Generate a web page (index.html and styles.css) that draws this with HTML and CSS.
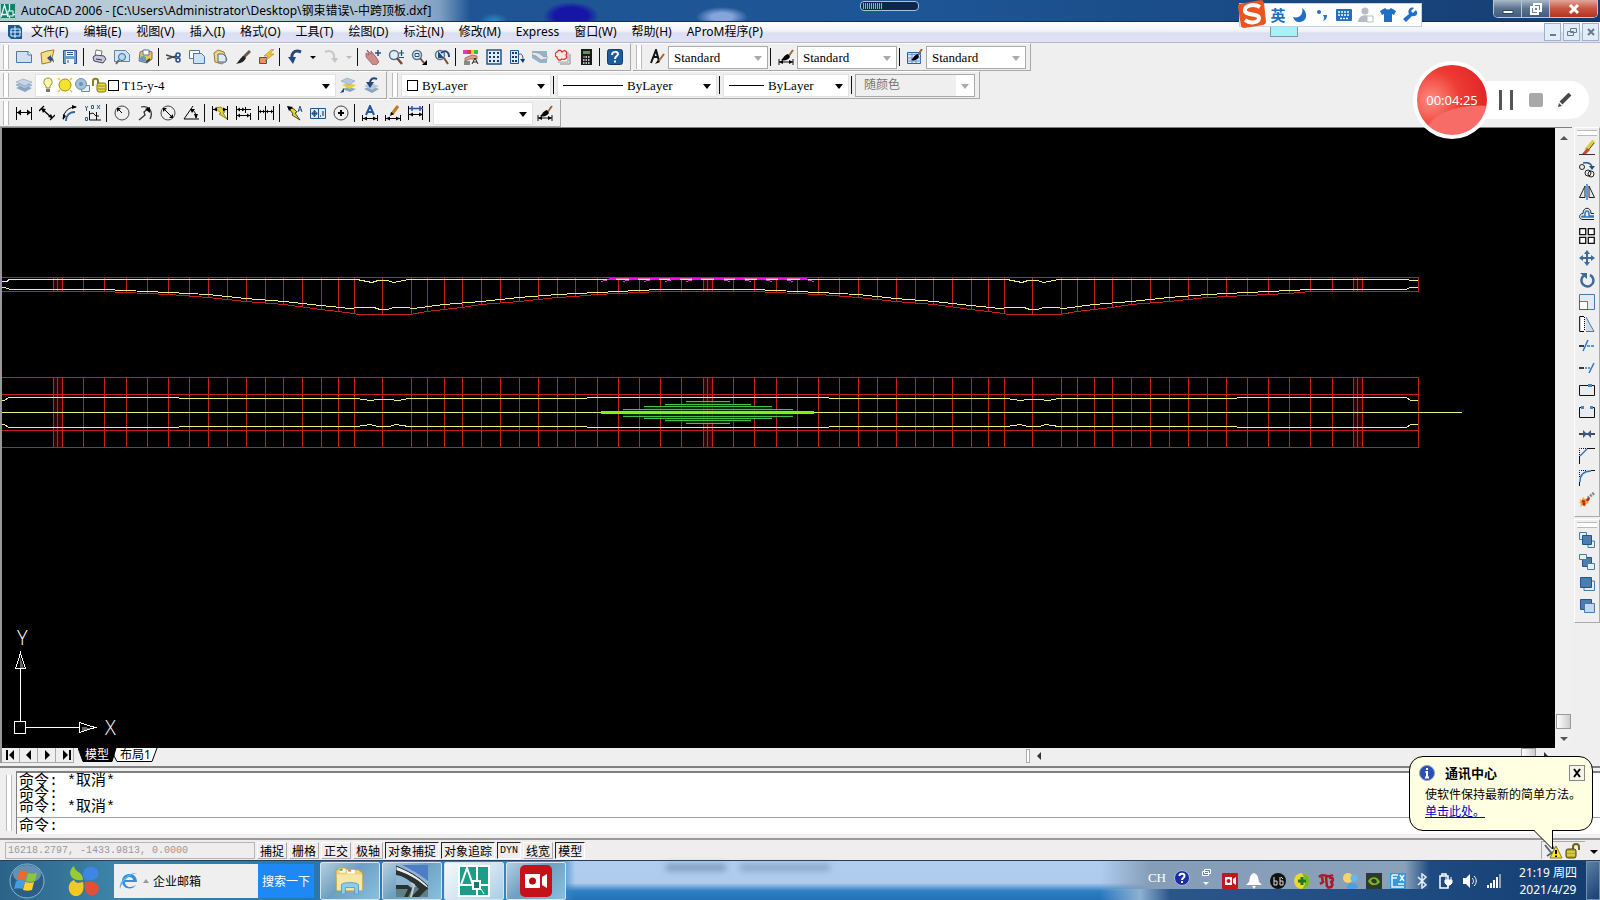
FILE: index.html
```html
<!DOCTYPE html>
<html lang="zh-CN">
<head>
<meta charset="utf-8">
<title>AutoCAD 2006</title>
<link rel="stylesheet" href="styles.css">
</head>
<body>
<header class="titlebar">
  <svg class="app-icon" viewBox="0 0 16 16"><rect width="16" height="16" fill="#0d8270"/><path d="M1 14L4.500 2 8 14M9.500 1v14M0 11.500h16" stroke="#e8f5f2" fill="none" stroke-width="1.300"/><rect x="8" y="8" width="5" height="5" fill="#0d8270" stroke="#fff"/><path d="M.5.500h15v15H.5z" fill="none" stroke="#9fd0c6"/></svg>
  <h1 class="title">AutoCAD 2006 - [C:\Users\Administrator\Desktop\钢束错误\-中跨顶板.dxf]</h1>
  <div class="winbtns">
    <button class="wb" aria-label="最小化"><svg width="14" height="14"><path d="M2 8.500h10v3H2z" fill="#fff" stroke="#345"/></svg></button>
    <button class="wb" aria-label="还原"><svg width="14" height="14"><path d="M5 2h7v7H5zM2 5h7v7H2z" fill="#68809c" stroke="#fff" stroke-width="2"/></svg></button>
    <button class="wb close" aria-label="关闭"><svg width="14" height="14"><path d="M3 3l8 8M11 3l-8 8" stroke="#fff" stroke-width="3"/></svg></button>
  </div>
</header>

<nav class="menubar">
  <svg class="doc-icon" viewBox="0 0 16 16"><path d="M1 1h11l3 3v11H4l-3-3z" fill="#1d5a8c"/><path d="M4 5h9v7H4zM8 2v12M3 8h11" stroke="#dff1ff" fill="none"/></svg>
  <button>文件(F)</button><button>编辑(E)</button><button>视图(V)</button><button>插入(I)</button><button>格式(O)</button><button>工具(T)</button><button>绘图(D)</button><button>标注(N)</button><button>修改(M)</button><button>Express</button><button>窗口(W)</button><button>帮助(H)</button><button>AProM程序(P)</button>
  <div class="mdibtns">
    <button aria-label="最小化窗口"><svg width="10" height="10"><path d="M2 8h6" stroke="#667b8f" stroke-width="2"/></svg></button>
    <button aria-label="还原窗口"><svg width="10" height="10"><path d="M3.500 1.500h6v4h-6zM.5 4.500h6v4h-6z" fill="#dce9f5" stroke="#667b8f"/></svg></button>
    <button aria-label="关闭窗口"><svg width="10" height="10"><path d="M2 2l6 6M8 2L2 8" stroke="#667b8f" stroke-width="2"/></svg></button>
  </div>
</nav>

<div class="toolrow">
  <div class="toolbar" role="toolbar" aria-label="标准"><i class="grip"></i>
    <button class="t" aria-label="新建"><svg viewBox="0 0 16 16"><path d="M.5 2.500h12l3 3v8H.5z" fill="#cfe0f2" stroke="#4a78a8"/><path d="M12 2v4h4" fill="#fff" stroke="#4a78a8"/></svg></button>
    <button class="t" aria-label="打开"><svg viewBox="0 0 16 16"><path d="M2 4l6-2 7-1-3 12-9 2z" fill="#f5dd8a" stroke="#a27c22"/><path d="M8 9l4-3v2c2 1 3 3 3 6-1-2-2-3-3-3v2z" fill="#2a4f86"/></svg></button>
    <button class="t" aria-label="保存"><svg viewBox="0 0 16 16"><path d="M1.500 1.500h13v13h-13z" fill="#6f9fcc" stroke="#2d5788"/><path d="M4 2h8v5H4zM4 10h8v5H4z" fill="#eef5fb"/><path d="M5 3.500h6M5 5.500h6M6 11v3" stroke="#2d5788"/></svg></button>
    <i class="sep"></i>
    <button class="t" aria-label="打印"><svg viewBox="0 0 16 16"><path d="M5 1l6 1-1 6-6-1z" fill="#fff" stroke="#777"/><path d="M2 8l3-2 8 1 2 3-3 4-9-2z" fill="#c8c8d8" stroke="#446"/><path d="M5 10l6 1" stroke="#335"/></svg></button>
    <button class="t" aria-label="打印预览"><svg viewBox="0 0 16 16"><path d="M.5 1.500h11l4 4v7H.5z" fill="#d5e3f2" stroke="#5a83ad"/><circle cx="8" cy="8" r="3.500" fill="#b8daf5" stroke="#36648f"/><path d="M5 11l-3 4" stroke="#666" stroke-width="2"/></svg></button>
    <button class="t" aria-label="发布"><svg viewBox="0 0 16 16"><path d="M3 3l5-2 7 2v7l-5 4-8-2z" fill="#efc44c" stroke="#6e6e86"/><path d="M6 1h6v5H6z" fill="#fff" stroke="#5a7aa5"/><circle cx="6" cy="10" r="3" fill="#5d9ad0"/><path d="M9 13l4-3" stroke="#345" stroke-width="2"/></svg></button>
    <i class="sep"></i>
    <button class="t" aria-label="剪切"><svg viewBox="0 0 16 16"><path d="M0 6l10 3M1 10l9-3" stroke="#444" stroke-width="1.500"/><circle cx="12" cy="6" r="2" fill="none" stroke="#234a86" stroke-width="1.500"/><circle cx="12" cy="11" r="2" fill="none" stroke="#234a86" stroke-width="1.500"/></svg></button>
    <button class="t" aria-label="复制"><svg viewBox="0 0 16 16"><path d="M.5 1.500h10v8H.5z" fill="#fff" stroke="#4a78a8"/><path d="M4.500 4.500h8l3 3v7h-11z" fill="#cfe0f2" stroke="#4a78a8"/></svg></button>
    <button class="t" aria-label="粘贴"><svg viewBox="0 0 16 16"><path d="M2 4l4-3 6 2 3 8-5 4-7-2z" fill="#f0d58a" stroke="#9a7b28"/><path d="M6 5h5l3 3v5H6z" fill="#dfeaf5" stroke="#4a6a95"/></svg></button>
    <button class="t" aria-label="特性匹配"><svg viewBox="0 0 16 16"><path d="M15 2L8 9" stroke="#6b5848" stroke-width="3"/><path d="M9 7l2 2c-2 4-5 5-10 6 3-2 4-7 8-8z" fill="#222"/></svg></button>
    <button class="t" aria-label="块编辑器"><svg viewBox="0 0 16 16"><path d="M1.500 8.500h7v6h-7z" fill="#f09060" stroke="#2a5a9a"/><path d="M14 0L6 7h4l-3 5 9-7h-4l4-5z" fill="#f7c531" stroke="#a56a10" stroke-width=".5"/></svg></button>
    <i class="sep"></i>
    <button class="t" aria-label="放弃"><svg viewBox="0 0 16 16"><path d="M14 3C7 0 4 5 5 10" fill="none" stroke="#24477e" stroke-width="3"/><path d="M1 8h8l-3 7z" fill="#24477e"/></svg></button><button class="d" aria-label="放弃列表"></button>
    <button class="t" aria-label="重做" disabled><svg viewBox="0 0 16 16"><path d="M2 3c7-3 10 2 9 7" fill="none" stroke="#c6c6c6" stroke-width="2"/><path d="M8 9h7l-3 5z" fill="#c6c6c6"/></svg></button><button class="d off" aria-label="重做列表" disabled></button>
    <i class="sep"></i>
    <button class="t" aria-label="实时平移"><svg viewBox="0 0 16 16"><path d="M1 4l3 2-2-5 4 4 0-3 5 6 3 5-3 3H8L1 8z" fill="#cc8c8c" stroke="#8c4e55" stroke-width=".7"/><path d="M13 1v6M10 4h6" stroke="#24508c" stroke-width="1.500"/></svg></button>
    <button class="t" aria-label="实时缩放"><svg viewBox="0 0 16 16"><circle cx="6" cy="6" r="4.500" fill="#dfeefa" stroke="#5c7287" stroke-width="1.500"/><path d="M9 9l5 6" stroke="#7a4a3a" stroke-width="2.500"/><path d="M11 4h5M13.500 1v6M11 8.500h5" stroke="#1d4d86" stroke-width="1.200"/></svg></button>
    <button class="t" aria-label="窗口缩放"><svg viewBox="0 0 16 16"><circle cx="6" cy="6" r="4.500" fill="#dfeefa" stroke="#5c7287" stroke-width="1.500"/><path d="M4 4.500h4v3H4z" fill="none" stroke="#1d4d86"/><path d="M9 9l4 5" stroke="#7a4a3a" stroke-width="2"/><path d="M16 11v5h-5z"/></svg></button>
    <button class="t" aria-label="缩放上一个"><svg viewBox="0 0 16 16"><circle cx="6" cy="6" r="4.500" fill="#dfeefa" stroke="#5c7287" stroke-width="1.500"/><path d="M10 9l4 6" stroke="#7a4a3a" stroke-width="2"/><path d="M15 8c0-6-4-7-8-4" fill="none" stroke="#24477e" stroke-width="2"/><path d="M4 2v7h6z" fill="#24477e"/></svg></button>
    <i class="sep"></i>
    <button class="t" aria-label="特性"><svg viewBox="0 0 16 16"><path d="M0 1h4v4H0z" fill="#e03ac0"/><path d="M4 1h4v4H4z" fill="#e23b2b"/><path d="M8 1h3v4H8z" fill="#f5d21f"/><path d="M11 1h4v4h-4z" fill="#3cbc3c"/><path d="M2 9l7-3 5 1v3H7l-5 2z" fill="#dba38b" stroke="#875546" stroke-width=".7"/><path d="M1 13h6M1 15h6M9 15l3-6 3 6M10 13h4" stroke="#222" fill="none"/></svg></button>
    <button class="t" aria-label="设计中心"><svg viewBox="0 0 16 16"><path d="M1 1h14v14H1z" fill="#dcecfb" stroke="#24548c" stroke-width="1.500"/><path d="M3 4h2M3 8h2M3 12h2M7 4h2M11 4h2M7 8h2M11 8h2M7 12h2M11 12h2" stroke="#163a6c" stroke-width="2"/></svg></button>
    <button class="t" aria-label="工具选项板"><svg viewBox="0 0 16 16"><path d="M1.500 1.500h8v13h-8z" fill="#dcecfb" stroke="#24548c"/><path d="M3 4h2M3 8h2M3 12h2M6 4h2M6 8h2M6 12h2" stroke="#163a6c" stroke-width="2"/><path d="M9 6c4-3 5 1 5 5" fill="none" stroke="#24548c"/><path d="M11 10h5l-2 4z" fill="#163a6c"/></svg></button>
    <button class="t" aria-label="图纸集"><svg viewBox="0 0 16 16"><path d="M0 2h15v12H8L0 9z" fill="#91b4cf"/><path d="M0 3l7 1 5 4 3-1v3l-6 1-5-4-4-1z" fill="#e3e6ea" stroke="#888" stroke-width=".6"/></svg></button>
    <button class="t" aria-label="标记集"><svg viewBox="0 0 16 16"><path d="M5 15h10V5" fill="none" stroke="#888"/><path d="M3 13h10V3" fill="#fff" stroke="#999"/><path d="M2 3c2-3 4-2 5 0 3-3 6 0 4 3 2 3-1 5-4 4-2 2-5 1-5-2-3-1-2-4 0-5z" fill="#fbe4e4" stroke="#e22b2b" stroke-width="1.300"/></svg></button>
    <button class="t" aria-label="计算器"><svg viewBox="0 0 16 16"><path d="M3 0h11v16H3z" fill="#191919"/><path d="M5 2h7v3H5z" fill="#4e9b5c"/><path d="M5 8h7M5 11h7M5 14h7" stroke="#eee" stroke-width="1.500" stroke-dasharray="1.500 1"/><path d="M5 8h1" stroke="#e22" stroke-width="2"/></svg></button>
    <i class="sep"></i>
    <button class="t" aria-label="帮助"><svg viewBox="0 0 16 16"><rect x=".5" y=".5" width="15" height="15" rx="2" fill="#1d5c9c" stroke="#123e6d"/><path d="M5 6c0-4 6-4 6-1 0 2-3 2-3 5M8 11.500v2" stroke="#fff" fill="none" stroke-width="2"/></svg></button>
  </div>
  <div class="toolbar" role="toolbar" aria-label="样式"><i class="grip"></i>
    <button class="t" aria-label="文字样式"><svg viewBox="0 0 16 16"><path d="M2 14L7 1l3 11M4 8h5" stroke="#111" stroke-width="2" fill="none"/><path d="M15 5l-6 8" stroke="#a0653a" stroke-width="2"/><path d="M6 15l3-4 2 2z"/></svg></button>
    <label class="combo dim w100"><select aria-label="文字样式"><option>Standard</option></select></label><i class="sep"></i>
    <button class="t" aria-label="标注样式"><svg viewBox="0 0 16 16"><path d="M15 1l-5 7" stroke="#a0653a" stroke-width="2"/><path d="M3 11c2-1 3-5 7-6l2 3c-2 3-5 4-9 3z"/><path d="M1 10v6M15 10v6M1 13h14" stroke="#111"/><path d="M1 13l4-2v4zM15 13l-4-2v4z"/></svg></button>
    <label class="combo dim w100"><select aria-label="标注样式"><option>Standard</option></select></label><i class="sep"></i>
    <button class="t" aria-label="表格样式"><svg viewBox="0 0 16 16"><path d="M.5 3.500h13v11H.5z" fill="#d2e4fa" stroke="#2c5da8"/><path d="M1 5.500h13M1 9h13M1 12h13M5 4v10M9 4v10" stroke="#6f9ad6"/><path d="M15 0l-4 6" stroke="#a0653a" stroke-width="2"/><path d="M4 11c2-1 3-5 7-6l1 3c-2 3-5 4-8 3z"/></svg></button>
    <label class="combo dim w100"><select aria-label="表格样式"><option>Standard</option></select></label>
  </div>
</div>

<div class="toolrow">
  <div class="toolbar" role="toolbar" aria-label="图层"><i class="grip"></i>
    <button class="t" aria-label="图层特性管理器"><svg viewBox="0 0 16 16"><path d="M0 11l7-3 9 3-7 4z" fill="#8aa5bf"/><path d="M0 8l7-3 9 3-7 4z" fill="#a8bfd4" stroke="#6f8ca8" stroke-width=".5"/><path d="M0 5l7-3 9 3-7 4z" fill="#c6d6e6" stroke="#7b96b0" stroke-width=".5"/></svg></button>
    <label class="combo layer">
      <svg viewBox="0 0 16 16"><path d="M8 1c5 0 5 6 2 8v2H6V9C3 7 3 1 8 1z" fill="#fff9ae" stroke="#998c28"/><path d="M6 12h4v3H6z" fill="#6c7a8c"/></svg>
      <svg viewBox="0 0 16 16"><circle cx="8" cy="8" r="6" fill="#f4e32b" stroke="#a98a10"/><path d="M1 1l2 2M15 1l-2 2M1 15l2-2M15 15l-2-2" stroke="#ecc41d" stroke-width="1.500"/></svg>
      <svg viewBox="0 0 16 16"><path d="M7.500 8.500h8v6h-8z" fill="#e7eef5" stroke="#7089a1"/><circle cx="7" cy="7" r="5.500" fill="#a4c1d8" stroke="#7894ac"/><circle cx="7" cy="7" r="2" fill="#6c93b4"/></svg>
      <svg viewBox="0 0 16 16"><path d="M2 9V4c0-3 5-3 5 0v3" fill="none" stroke="#8d8212" stroke-width="2"/><rect x="6" y="6" width="9" height="9" rx="2" fill="#e4d944" stroke="#7e7310"/><path d="M7 9h7M7 12h7" stroke="#9a8c1a"/></svg>
      <i class="swatch"></i><select aria-label="图层"><option>T15-y-4</option></select>
    </label>
    <button class="t" aria-label="将对象的图层置为当前"><svg viewBox="0 0 16 16"><path d="M2 12l6-2 8 2-6 3z" fill="#8aa5bf"/><path d="M2 8l6-2 8 2-6 4z" fill="#e8cf3a"/><path d="M1 4l6-3 8 3-6 4z" fill="#b7cadb" stroke="#7b96b0" stroke-width=".5"/><path d="M0 16l4-5v4z" fill="#24477e"/></svg></button>
    <button class="t" aria-label="上一个图层"><svg viewBox="0 0 16 16"><path d="M1 12l7-3 8 3-7 4z" fill="#8aa5bf"/><path d="M1 9l7-3 8 3-7 4z" fill="#b7cadb"/><path d="M14 2C9 0 7 3 7 6" fill="none" stroke="#24477e" stroke-width="2"/><path d="M3 5h8l-4 6z" fill="#24477e"/></svg></button>
  </div>
  <div class="toolbar" role="toolbar" aria-label="对象特性"><i class="grip"></i>
    <label class="combo w150"><i class="swatch"></i><select aria-label="颜色"><option>ByLayer</option></select></label><i class="sep"></i>
    <label class="combo w160"><i class="line l60"></i><select aria-label="线型"><option>ByLayer</option></select></label><i class="sep"></i>
    <label class="combo w126"><i class="line l35"></i><select aria-label="线宽"><option>ByLayer</option></select></label><i class="sep"></i>
    <label class="combo dim grey w120"><select aria-label="打印样式" disabled><option>随颜色</option></select></label>
  </div>
</div>

<div class="toolrow">
  <div class="toolbar" role="toolbar" aria-label="标注"><i class="grip"></i>
    <button class="t" aria-label="线性标注"><svg viewBox="0 0 16 16"><path d="M.5 2v13M15.500 2v13M1 7.500h14" stroke="#000"/><path d="M1 7.500l4-3v6zM15 7.500l-4-3v6z"/></svg></button>
    <button class="t" aria-label="对齐标注"><svg viewBox="0 0 16 16"><path d="M0 6l5-5M11 15l5-5M3 4l10 9" stroke="#000" stroke-width="1.300"/><path d="M2 3l5 1-3 4zM14 13l-5-1 3-3z"/></svg></button>
    <button class="t" aria-label="弧长标注"><svg viewBox="0 0 16 16"><path d="M1 14C2 6 7 2 14 2" fill="none" stroke="#000"/><path d="M4 16c0-5 3-9 9-9" fill="none" stroke="#2c63ac" stroke-width="2"/><path d="M15 2l-5-2v4zM1 15V9l3 2z"/></svg></button>
    <button class="t" aria-label="坐标标注"><svg viewBox="0 0 16 16"><path d="M4.500 6v9H16M4 9l4-1 3 3h3M11.500 7v8" fill="none" stroke="#111"/><path d="M0 1l1.500 2L3 1M1.500 3v3M12 0l3 4M15 0l-3 4M.5 12.500h2v3h-2zM6.500.500h2v3h-2z" fill="none" stroke="#345b94"/></svg></button>
    <i class="sep"></i>
    <button class="t" aria-label="半径标注"><svg viewBox="0 0 16 16"><circle cx="8" cy="8" r="7" fill="none" stroke="#444"/><path d="M8 8L4 4" stroke="#000"/><path d="M3 3h4L3 7z"/></svg></button>
    <button class="t" aria-label="折弯标注"><svg viewBox="0 0 16 16"><path d="M4 2c7-2 13 4 9 12M2 15l6-5-1-3 5-4" fill="none" stroke="#333" stroke-width="1.300"/><path d="M13 2v6L8 4z"/></svg></button>
    <button class="t" aria-label="直径标注"><svg viewBox="0 0 16 16"><circle cx="8" cy="8" r="7" fill="none" stroke="#444"/><path d="M4 4l8 8" stroke="#000"/><path d="M3 3h4L3 7zM13 13H9l4-4z"/></svg></button>
    <button class="t" aria-label="角度标注"><svg viewBox="0 0 16 16"><path d="M10 1L1 14h15M8 4c4 2 5 5 5 9" fill="none" stroke="#000"/><path d="M7 4l5 0-3 4zM13 14l-2-5h4z"/></svg></button>
    <i class="sep"></i>
    <button class="t" aria-label="快速标注"><svg viewBox="0 0 16 16"><path d="M.5 1v14M15.500 1v14M1 4.500h14" stroke="#000"/><path d="M3 3l6-1 4 5-2 1 4 6-8-5 2-1z" fill="#e8d42c" stroke="#665e10" stroke-width=".7"/><path d="M1 4.500l4-2v4zM15 4.500l-4-2v4z"/></svg></button>
    <button class="t" aria-label="基线标注"><svg viewBox="0 0 16 16"><path d="M1.500 1v14M10.500 2v6M15.500 8v7M2 4.500h14M2 10.500h13" stroke="#000"/><path d="M2 4.500l3-2v4zM10 4.500l-3-2v4zM2 10.500l3-2v4zM15 10.500l-3-2v4z"/></svg></button>
    <button class="t" aria-label="连续标注"><svg viewBox="0 0 16 16"><path d="M.5 1v14M7.500 1v14M15.500 1v14M1 6.500h14" stroke="#000"/><path d="M1 6.500l2-2v4zM7 6.500l-2-2v4zM8 6.500l2-2v4zM15 6.500l-2-2v4z"/></svg></button>
    <i class="sep"></i>
    <button class="t" aria-label="快速引线"><svg viewBox="0 0 16 16"><path d="M1 2l6 2 3 3-2 1 5 7-8-5 1-1z" fill="#e8d42c" stroke="#222" stroke-width=".8"/><path d="M0 1l6 1-4 4z"/><path d="M11 7l2-6 2 6M12 5h3" stroke="#2c4f94" fill="none"/></svg></button>
    <button class="t" aria-label="公差"><svg viewBox="0 0 16 16"><path d="M.5 3.500h15v10H.5zM8.500 3v11" fill="#dceafa" stroke="#24548c"/><circle cx="4.500" cy="8.500" r="2" fill="none" stroke="#24548c"/><path d="M4.500 5v7M1.500 8.500h6M10 11h1M13 6v5" stroke="#24548c" stroke-width="1.300"/></svg></button>
    <button class="t" aria-label="圆心标记"><svg viewBox="0 0 16 16"><circle cx="8" cy="8" r="7" fill="none" stroke="#444"/><path d="M8 5v6M5 8h6" stroke="#000" stroke-width="2"/></svg></button>
    <i class="sep"></i>
    <button class="t" aria-label="编辑标注"><svg viewBox="0 0 16 16"><path d="M4 10l4-9 4 9M5 7h6" fill="none" stroke="#2456a0" stroke-width="2"/><path d="M.5 10v6M15.500 10v6M1 13.500h14" stroke="#000"/><path d="M1 13.500l4-2v4zM15 13.500l-4-2v4z"/></svg></button>
    <button class="t" aria-label="编辑标注文字"><svg viewBox="0 0 16 16"><path d="M13 1L7 9" stroke="#c67a1a" stroke-width="3"/><path d="M5 11l1-4 3 2z"/><path d="M.5 10v6M15.500 10v6M1 13.500h14" stroke="#000"/><path d="M1 13.500l4-2v4zM15 13.500l-4-2v4z"/></svg></button>
    <button class="t" aria-label="标注更新"><svg viewBox="0 0 16 16"><path d="M.5 1v14M14.500 1v14M1 9.500h14" stroke="#000"/><path d="M1 3.500h14M4 1v5M12 1v5" stroke="#2456a0" stroke-width="1.500"/><path d="M1 9.500l4-2v4zM15 9.500l-4-2v4z"/></svg></button>
    <i class="sep"></i>
    <label class="combo w100"><select aria-label="当前标注样式"><option></option></select></label>
    <button class="t" aria-label="标注样式管理"><svg viewBox="0 0 16 16"><path d="M15 1l-5 7" stroke="#a0653a" stroke-width="2"/><path d="M3 11c2-1 3-5 7-6l2 3c-2 3-5 4-9 3z"/><path d="M1 10v6M15 10v6M1 13h14" stroke="#111"/><path d="M1 13l4-2v4zM15 13l-4-2v4z"/></svg></button>
  </div>
</div>

<main class="work">
  <section class="docwin">
    <div class="viewrow">
      <svg class="drawing" role="img" aria-label="图形">
        <defs>
          <path id="girder" d="M0 277.500V291.500H104L147 293.500L169 294.500L208 297.500L246 301.500L284 304.500L321 309.500L338 311.500L354 313.500L358 314.500H410L427 311.500L444 309.500L462 307.500L481 304.500L519 301.500L557 297.500L575 296.500L597 294.500L618 293.500L660 291.500H754L797 293.500L819 294.500L858 297.500L896 301.500L934 304.500L971 309.500L988 311.500L1004 313.500L1008 314.500H1060L1077 311.500L1094 309.500L1112 307.500L1131 304.500L1169 301.500L1207 297.500L1247 295.500L1289 293.500L1311 291.500H1418.500V277.500Z"/>
          <path id="stations" d="M53.500 270V450M57.500 270V450M62.500 270V450M83.500 270V450M104.500 270V450M126.500 270V450M147.500 270V450M168.500 270V450M189.500 270V450M208.500 270V450M227.500 270V450M246.500 270V450M265.500 270V450M283.500 270V450M302.500 270V450M321.500 270V450M338.500 270V450M354.500 270V450M382.500 270V450M411.500 270V450M427.500 270V450M444.500 270V450M462.500 270V450M481.500 270V450M500.500 270V450M519.500 270V450M538.500 270V450M557.500 270V450M575.500 270V450M597.500 270V450M618.500 270V450M639.500 270V450M660.500 270V450M681.500 270V450M703.500 270V450M707.500 270V450M712.500 270V450M733.500 270V450M754.500 270V450M776.500 270V450M797.500 270V450M818.500 270V450M839.500 270V450M858.500 270V450M877.500 270V450M896.500 270V450M915.500 270V450M933.500 270V450M952.500 270V450M971.500 270V450M988.500 270V450M1004.500 270V450M1032.500 270V450M1061.500 270V450M1077.500 270V450M1094.500 270V450M1112.500 270V450M1131.500 270V450M1150.500 270V450M1169.500 270V450M1188.500 270V450M1207.500 270V450M1226.500 270V450M1247.500 270V450M1268.500 270V450M1289.500 270V450M1310.500 270V450M1332.500 270V450M1353.500 270V450M1357.500 270V450M1362.500 270V450"/>
          <clipPath id="inGirder"><use href="#girder"/></clipPath>
          <clipPath id="inPlan"><path d="M0 377H1419V447H0z"/></clipPath>
        </defs>
        <g class="cad" transform="translate(-2 -128)">
          <path class="ember" d="M53 278h10v13H53zM703 278h10v13h-10zM1353 278h10v13h-10zM53 378h10v69H53zM703 378h10v69h-10zM1353 378h10v69h-10z"/>
          <g class="red">
            <use href="#stations" clip-path="url(#inGirder)"/><use href="#girder"/>
            <use href="#stations" clip-path="url(#inPlan)"/>
            <path d="M0 377.500H1418.500V447.500H0M0 394.500H1418M0 430.500H1418"/>
          </g>
          <g class="yellow">
            <path d="M0 281.500H7L9 279.500H357L372 282.500L378 280.500H388L393 282.500L409 279.500H1007L1022 282.500L1028 280.500H1038L1043 282.500L1059 279.500H1408L1410 280.500H1418"/>
            <path d="M0 287.500H5L10 289.500H104L147 291.500L169 292.500L208 294.500L246 298.500L284 301.500L321 305.500L350 308.500L358 307.500H374L380 309.500H388L393 307.500H406L413 308.500L444 304.500L481 301.500L519 297.500L557 294.500L618 291.500L660 289.500H754L797 291.500L819 292.500L858 294.500L896 298.500L934 301.500L971 305.500L1000 308.500L1008 307.500H1024L1030 309.500H1038L1043 307.500H1056L1063 308.500L1094 304.500L1131 301.500L1169 297.500L1207 294.500L1268 291.500L1311 289.500H1406L1410 287.500H1418"/>
            <path d="M0 400.500H4L9 397.500H178L180 398.500H357L370 400.500L378 399.500H390L398 400.500L409 398.500H586L588 397.500H828L830 398.500H1007L1020 400.500L1028 399.500H1040L1048 400.500L1059 398.500H1236L1238 397.500H1406L1411 400.500H1418"/>
            <path d="M0 424.500H4L9 427.500H178L180 426.500H357L370 424.500L378 426.500H390L395 424.500L409 426.500H586L588 427.500H828L830 426.500H1007L1020 424.500L1028 426.500H1040L1045 424.500L1059 426.500H1236L1238 427.500H1406L1411 424.500H1418"/>
            <path d="M0 412.500H1462"/>
          </g>
          <path class="glow" d="M686 401h44v4h21v2h21v3h21v6h-21v3h-21v3h-21v2h-44v-2h-21v-3h-21v-3h-21v-6h21v-3h21v-2h21z"/>
          <path class="green" d="M686 401.500h44M665 404.500h86M644 406.500h128M623 409.500h170M623 416.500h170M644 418.500h128M665 420.500h86M686 423.500h44"/>
          <path class="lime" d="M601 412.500h213"/>
          <path class="pink" d="M616 278.500h184"/>
          <path class="magenta" d="M609 279h7M629 279h9M650 279h9M670 279h10M692 279h9M714 279h10M735 279h9M757 279h9M778 279h9M800 279h7"/>
          <path class="mauve" d="M601 281.500l8-2M623 281.500l8-2M644 281.500l8-2M665 281.500l8-2M686 281.500l8-2M730 281.500l-8-2M751 281.500l-8-2M772 281.500l-8-2M793 281.500l-8-2M814 281.500l-8-2"/>
          <g class="ucs">
            <path d="M14.500 721.500h11v12h-11zM20.500 721V669M26 727.500H79M15.500 668.500h10L20.500 653zM79.500 722.500v10L95 727.500z"/>
            <path d="M20 656v12h4zM82 727v4l10-3z" fill="#666" stroke="none"/>
            <text x="17" y="645">Y</text><text x="105" y="735">X</text>
          </g>
        </g>
      </svg>
      <div class="vscroll"><button aria-label="向上滚动"><i class="tri up"></i></button><span class="track"></span><i class="thumb"></i><button aria-label="向下滚动"><i class="tri down"></i></button></div>
    </div>
    <div class="tabrow">
      <button class="nav" aria-label="第一个"><svg width="12" height="12"><path d="M2 1v10" stroke="#000" stroke-width="2"/><path d="M9 1v10L4 6z"/></svg></button>
      <button class="nav" aria-label="上一个"><svg width="12" height="12"><path d="M8 1v10L3 6z"/></svg></button>
      <button class="nav" aria-label="下一个"><svg width="12" height="12"><path d="M4 1v10l5-5z"/></svg></button>
      <button class="nav" aria-label="最后一个"><svg width="12" height="12"><path d="M11 1v10" stroke="#000" stroke-width="2"/><path d="M4 1v10l5-5z"/></svg></button>
      <div class="tabs"><svg viewBox="0 0 82 15" width="82" height="15"><path d="M36 0v8l3 5.500h35L79 0" fill="#fff" stroke="#000"/><path d="M0 0l5 13.500h29L38 0z" stroke="#000"/></svg><button class="on">模型</button><button>布局1</button></div>
      <div class="hscroll"><i class="split"></i><button aria-label="向左滚动"><i class="tri left"></i></button><span class="track"></span><i class="thumb"></i><button aria-label="向右滚动"><i class="tri right"></i></button></div>
    </div>
  </section>
  <aside class="side">
    <div class="vbar" role="toolbar" aria-label="修改"><i class="vgrip"></i>
      <button aria-label="删除"><svg viewBox="0 0 16 16"><path d="M0 14.500h16" stroke="#333"/><path d="M15 1L7 10" stroke="#dccd45" stroke-width="4"/><path d="M15 3L8 12" stroke="#57522a"/><path d="M8 8l3 2-4 4H3z" fill="#c34b42"/></svg></button>
      <button aria-label="复制对象"><svg viewBox="0 0 16 16"><circle cx="3" cy="5" r="2.500" fill="none" stroke="#222"/><circle cx="9" cy="11" r="3" fill="none" stroke="#222"/><circle cx="12" cy="12" r="3" fill="none" stroke="#222"/><path d="M4 1c5-1 8 0 9 4" fill="none" stroke="#2c5f9e" stroke-width="1.500"/><path d="M10 4h6l-3 4z" fill="#1d4d86"/></svg></button>
      <button aria-label="镜像"><svg viewBox="0 0 16 16"><path d="M6 2v11.500H.5zM10 2v11.500h5.500z" fill="#dfe7ef" stroke="#222"/><path d="M8 0v16" stroke="#2f7fd0" stroke-width="1.500"/></svg></button>
      <button aria-label="偏移"><svg viewBox="0 0 16 16"><path d="M15 13.500H4c-5 0-4-6 0-6 0-7 8-7 8 0h3" fill="none" stroke="#222"/><path d="M15 11H4c-2 0-2-1 2-1V8c0-4 4-4 4 0v2h5" fill="none" stroke="#2f78c4" stroke-width="1.500"/></svg></button>
      <button aria-label="阵列"><svg viewBox="0 0 16 16"><path d="M.7.7h6v6h-6zM9.300.7h6v6h-6zM.7 9.300h6v6h-6zM9.300 9.300h6v6h-6z" fill="#fff" stroke="#111" stroke-width="1.300"/></svg></button>
      <button aria-label="移动"><svg viewBox="0 0 16 16"><path d="M8 2v12M2 8h12" stroke="#3e6a9c" stroke-width="2"/><path d="M8 0l3 4H5zM8 16l3-4H5zM0 8l4-3v6zM16 8l-4-3v6z" fill="#3e6a9c"/></svg></button>
      <button aria-label="旋转"><svg viewBox="0 0 16 16"><path d="M5 3.500a6 6 0 1 0 6-.5" fill="none" stroke="#3e6a9c" stroke-width="2.500"/><path d="M1 1h7v6z" fill="#3e6a9c"/></svg></button>
      <button aria-label="缩放"><svg viewBox="0 0 16 16"><path d="M.5.500h15v15H.5z" fill="#e2eaf4" stroke="#4a78a8"/><path d="M.5 7.500h8v8h-8z" fill="#fff" stroke="#000" stroke-dasharray="1 1"/></svg></button>
      <button aria-label="拉伸"><svg viewBox="0 0 16 16"><path d="M7 1l8 14.500H7" fill="#cfdceb" stroke="#4a78a8"/><path d="M5 .5H.7v15H5" fill="#fff" stroke="#000"/><path d="M5.500 1v14" stroke="#000" stroke-dasharray="1 1"/></svg></button>
      <button aria-label="修剪"><svg viewBox="0 0 16 16"><path d="M0 8h5" stroke="#000" stroke-width="1.500"/><path d="M4 13L9 2" stroke="#2f78c4" stroke-width="1.500"/><path d="M8 8h8" stroke="#2f78c4" stroke-width="1.500" stroke-dasharray="3 1"/></svg></button>
      <button aria-label="延伸"><svg viewBox="0 0 16 16"><path d="M0 8h5" stroke="#000" stroke-width="1.500"/><path d="M10 13l5-10" stroke="#2f78c4" stroke-width="1.500"/><path d="M6 8h6" stroke="#2f78c4" stroke-width="1.500" stroke-dasharray="2 1"/></svg></button>
      <button aria-label="打断于点"><svg viewBox="0 0 16 16"><path d="M.5 3.500h15v10H.5z" fill="#e9edf2" stroke="#111"/><path d="M9 2h4v3H9z" fill="#4a82ba"/></svg></button>
      <button aria-label="打断"><svg viewBox="0 0 16 16"><path d="M3 3.500H.5v10h15v-10H13" fill="#e9edf2" stroke="#111"/><path d="M2 2h3v3H2zM11 2h3v3h-3z" fill="#4a82ba"/></svg></button>
      <button aria-label="合并"><svg viewBox="0 0 16 16"><path d="M0 8h16" stroke="#111" stroke-width="1.500"/><path d="M4 4l4 4-4 4zM12 4L8 8l4 4z" fill="#355d88"/></svg></button>
      <button aria-label="倒角"><svg viewBox="0 0 16 16"><path d="M.5 16V8M8 .5h8" stroke="#111"/><path d="M.5 7V.5H7" fill="none" stroke="#111" stroke-dasharray="1 1"/><path d="M1 8l7-7" stroke="#2f78c4" stroke-width="1.500"/></svg></button>
      <button aria-label="圆角"><svg viewBox="0 0 16 16"><path d="M.5 16v-4M12 .5h4" stroke="#111"/><path d="M.5 7V.5H7" fill="none" stroke="#111" stroke-dasharray="1 1"/><path d="M1 12C1 5 5 1 12 1" fill="none" stroke="#2f78c4" stroke-width="1.500"/></svg></button>
      <button aria-label="分解"><svg viewBox="0 0 16 16"><path d="M15 1L9 6" stroke="#888" stroke-width="3" stroke-dasharray="2 1"/><path d="M0 7l3 1 1-3 2 2 3-1-1 3 2 2-3 1-1 3-2-2-3 2 1-3-2-2 2-1z" fill="#eda72f"/><path d="M3 9l3 1M4 13l2-2M8 9l2-3" stroke="#c1261e" stroke-width="2.500"/></svg></button>
    </div>
    <div class="vbar" role="toolbar" aria-label="绘图次序"><i class="vgrip"></i>
      <button aria-label="前置"><svg viewBox="0 0 16 16"><path d="M.5.500h7v7h-7zM9 9h6.500v6.500H9z" fill="#e6eef7" stroke="#4a78a8"/><path d="M3.500 3.500h9v9h-9z" fill="#4a7db0" stroke="#24548c"/></svg></button>
      <button aria-label="后置"><svg viewBox="0 0 16 16"><path d="M3.500 3.500h9v9h-9z" fill="#4a7db0" stroke="#24548c"/><path d="M.5.500h7v5h-7zM8.500 9.500h7v6h-7z" fill="#e6eef7" stroke="#4a78a8"/></svg></button>
      <button aria-label="置于对象之上"><svg viewBox="0 0 16 16"><path d="M5 5h10.500v9.500H5z" fill="#e6eef7" stroke="#4a78a8"/><path d="M1.500 1.500h11v10h-11z" fill="#4a7db0" stroke="#24548c"/></svg></button>
      <button aria-label="置于对象之下"><svg viewBox="0 0 16 16"><path d="M1.500 1.500h11v10h-11z" fill="#4a7db0" stroke="#24548c"/><path d="M5.500 5.500h10v9h-10z" fill="#c6d7ea" stroke="#4a78a8"/></svg></button>
    </div>
  </aside>
</main>

<section class="command">
  <i class="grip"></i>
  <div class="console">
    <pre class="log">命令: *取消*
命令:
命令: *取消*</pre>
    <div class="prompt"><label for="cmd">命令:</label><input id="cmd" type="text"></div>
  </div>
</section>

<footer class="status">
  <output class="coords">16218.2797, -1433.9813, 0.0000</output>
  <button>捕捉</button><button>栅格</button><button>正交</button><button>极轴</button><button class="in">对象捕捉</button><button class="in">对象追踪</button><button class="in dyn">DYN</button><button>线宽</button><button class="in">模型</button>
  <div class="stray">
    <svg width="38" height="18"><path d="M1 3l8 10M3 14l6-4M7 2l3 5" stroke="#567" stroke-width="2"/><path d="M12 4l6 12H6z" fill="#f7e72e" stroke="#8a7c10"/><path d="M12 8v4M12 13.500v1.500" stroke="#000" stroke-width="2"/><path d="M29 8V5c0-4 6-4 6 0v3" fill="none" stroke="#6b6410" stroke-width="2"/><rect x="22" y="7" width="10" height="9" rx="2" fill="#b7a71d" stroke="#4b450a"/><path d="M23 10h8M23 13h8" stroke="#f0e67a"/></svg>
  </div>
  <button class="d" aria-label="状态栏菜单"></button>
</footer>

<footer class="taskbar">
  <button class="start" aria-label="开始"><svg viewBox="0 0 36 36"><circle cx="18" cy="18" r="17" fill="#2c5d87" stroke="#86b9d6"/><ellipse cx="18" cy="11" rx="14" ry="9" fill="#7fa6c2" opacity=".7"/><path d="M10 9c3-2 6-1 8 0l-2 8c-3-1-5-1-8 0z" fill="#ee6a2c"/><path d="M19 10c3 1 6 1 9 0l-2 8c-3 1-6 1-9 0z" fill="#8cc63e"/><path d="M7 18c3-1 6-1 9 0l-2 8c-3-1-6-1-9 0z" fill="#3f9fe0"/><path d="M16 19c3 1 6 1 9 0l-2 8c-3 1-6 1-9 0z" fill="#fbd02e"/></svg></button>
  <button class="clover" aria-label="浏览器"><svg viewBox="0 0 32 32"><path d="M15 15C3 17-2 7 6 1c1 7 9 5 9 14z" fill="#9bcc2d"/><path d="M16 14C12 3 22-1 29 4c5 8-4 14-13 10z" fill="#3f86e4"/><path d="M17 17c9-3 16 3 13 10-6 7-15 3-13-10z" fill="#e25137"/><path d="M15 17c2 9-2 15-9 14-8-4-6-14 0-16 2 4 5 3 9 2z" fill="#f4c81f"/></svg></button>
  <form class="search" role="search" onsubmit="return false">
    <svg viewBox="0 0 20 20"><path d="M18 11H6c0 6 7 6 11 3-4 6-14 4-14-4 0-9 15-10 15 1zM6 9h8c0-4-7-4-8 0z" fill="#3490dd"/><path d="M1 18C-1 11 9 1 18 2 11 3 3 10 1 18z" fill="#59aef0"/></svg><i class="tri up"></i>
    <input type="text" value="企业邮箱" aria-label="搜索"><button>搜索一下</button>
  </form>
  <div class="tasks">
  <button class="task" aria-label="资源管理器"><svg viewBox="0 0 34 32"><path d="M2 5l4-3h6l2 2h12l4 3v19H3z" fill="#ecd27d" stroke="#c09b41"/><path d="M6 3h6v4H6zM14 4h8v4h-8z" fill="#fff"/><path d="M6 3h3v2H6z" fill="#4aa041"/><path d="M15 4h3v2h-3z" fill="#e37b27"/><path d="M3 9h27v17H3z" fill="#f7e7a5"/><path d="M8 30V20c0-3 18-3 18 0v10h-4v-7H12v7z" fill="#8fcdee" stroke="#569dc6"/></svg></button>
  <button class="task" aria-label="桥梁软件"><svg viewBox="0 0 32 32"><path d="M0 0h32v32H0z" fill="#8fb4d2"/><path d="M6 0h26v16C22 8 14 4 6 0z" fill="#4f7cc6"/><path d="M0 22h32v10H0z" fill="#5f7f86"/><path d="M0 1c12 5 22 10 32 20v3C20 14 10 9 0 6z" fill="#e9edf0" stroke="#222"/><path d="M0 5c10 3 20 8 29 16l3 2-9 9h-8l8-8C14 15 7 11 0 10z" fill="#2b3331"/><path d="M0 20h12l4 4-4 8H8l4-8H0z" fill="#2b3331"/><path d="M15 18l3 2-3 12" stroke="#c2ccd0" stroke-width="2" fill="none"/></svg></button>
  <button class="task active" aria-label="AutoCAD"><svg viewBox="0 0 32 32"><path d="M1 1h30v30H1z" fill="#1c9c89" stroke="#fff" stroke-width="2"/><path d="M3 20L9 3l6 17M19 2v28M2 20h28" stroke="#fff" stroke-width="2" fill="none"/><path d="M15 16h7v8h-7z" fill="#16796c" stroke="#fff" stroke-width="2"/><path d="M23 24l3 5" stroke="#fff"/></svg></button>
  <button class="task" aria-label="录屏"><svg viewBox="0 0 32 32"><rect width="32" height="32" rx="5" fill="#c5111a"/><path d="M5 9h15v14H5zM22 12l5-3v14l-5-3z" fill="#fff"/><circle cx="12.500" cy="16" r="3.500" fill="#b30e16"/></svg></button>
  </div>
  <i class="smudge"></i>
  <div class="tray">
    <span class="lang">CH</span>
    <svg class="raised" viewBox="0 0 16 16"><circle cx="8" cy="8" r="7.500" fill="#1d2fa0" stroke="#a9b6e4"/><path d="M5.500 6c0-3 5-3 5 0 0 2-2.500 2-2.500 4M8 11v2" stroke="#fff" fill="none" stroke-width="2"/></svg>
    <svg class="restore" viewBox="0 0 16 22"><path d="M6.500 2.500h6v4h-6zM4.500 4.500h6v4h-6z" fill="#6682a2" stroke="#fff"/><path d="M5 15h6l-3 3z" fill="#fff"/></svg>
    <svg viewBox="0 0 16 16"><rect width="16" height="16" rx="1" fill="#c01820"/><path d="M3 4h7v8H3zM11 6l3-2v8l-3-2z" fill="#fff"/><circle cx="6.500" cy="8" r="2" fill="#c01820"/></svg>
    <svg viewBox="0 0 16 16"><path d="M8 0c5 2 4 6 5 9l3 3H0l3-3c1-3 0-7 5-9zM6 13h4l-2 3z" fill="#fff"/></svg>
    <svg viewBox="0 0 16 16"><circle cx="8" cy="8" r="8" fill="#111"/><path d="M4 4v8h3V8H4M10 4v8M10 8h3v4h-3M11 4l2 2" fill="none" stroke="#ddd"/></svg>
    <svg viewBox="0 0 16 16"><circle cx="8" cy="8" r="8" fill="#e9d92d"/><path d="M8 0a8 8 0 0 1 0 16c4-4 4-8 0-16z" fill="#75b72f"/><path d="M8 4v8M4 8h8" stroke="#1e7528" stroke-width="3"/></svg>
    <svg viewBox="0 0 16 16"><path d="M1 4c5-5 7 2 14-2M4 4l1 5-3 2M8 4l1 10M11 5c6-1 4 4 1 4 4 0 3 7-3 5" fill="none" stroke="#b51424" stroke-width="2.500"/></svg>
    <svg viewBox="0 0 16 16"><circle cx="6" cy="5" r="5" fill="#f6d468"/><circle cx="12" cy="5" r="3.500" fill="#64b8ef"/><path d="M5 15c-1-6 10-7 11-1 0 2-9 3-11 1z" fill="#4aa0e4"/></svg>
    <svg viewBox="0 0 16 16"><path d="M0 0h16v16H0z" fill="#2e3930"/><path d="M2 8c4-6 10-4 12 1-4 5-10 4-12-1zm3 0c2 3 5 3 6 1-1-4-5-4-6-1z" fill="#7cb51e"/></svg>
    <svg viewBox="0 0 16 16"><path d="M0 0h16v16H0z" fill="#3a96d4"/><path d="M2 2h6M2 5h5M2 2v12h12M10 2l4 6M14 2l-4 6M8 11h6" stroke="#e9f6ff" stroke-width="1.500" fill="none"/></svg>
    <svg viewBox="0 0 16 16"><path d="M4 4l8 8-4 3V1l4 3-8 8" fill="none" stroke="#e5eefa" stroke-width="1.500"/></svg>
    <svg viewBox="0 0 16 16"><path d="M2 3h8v12H2zM4 1h4v2H4z" fill="none" stroke="#fff" stroke-width="1.500"/><path d="M7 7h7v3l-2 2H9l-2-2zM8 4v3M13 4v3M10 12v3" fill="#fff" stroke="#fff"/></svg>
    <svg viewBox="0 0 16 16"><path d="M1 5h3l4-4v14l-4-4H1z" fill="#fff"/><path d="M10 5c2 2 2 4 0 6M12 3c3 3 3 7 0 10" fill="none" stroke="#fff"/></svg>
    <svg viewBox="0 0 16 16"><path d="M1 12h2v3H1zM4 10h2v5H4zM7 7h2v8H7zM10 4h2v11h-2z" fill="#fff"/><path d="M13 1h2v14h-2z" fill="#8da2bb"/></svg>
    <time class="clock"><span>21:19 周四</span><span>2021/4/29</span></time>
    <button class="showdesk" aria-label="显示桌面"></button>
  </div>
</footer>

<div class="battery"></div>

<div class="ime">
  <svg class="ime-logo" viewBox="0 0 28 28"><path d="M1 4l22-4q2 0 3 3l2 19q0 2-3 3L6 28q-2 0-3-2L0 7q0-2 1-3z" fill="#ea5420"/><path d="M22 7C15 3 6 6 7 11s14 2 14 7-9 6-14 2" fill="none" stroke="#fff" stroke-width="4"/></svg>
  <button class="cn">英</button>
  <button aria-label="月亮"><svg viewBox="0 0 16 16"><path d="M10 1c6 4 6 14-3 14-3 0-5-2-6-5 6 2 11-3 9-9z" fill="#1f6fc6"/></svg></button>
  <button aria-label="标点"><svg viewBox="0 0 16 16"><circle cx="5" cy="5" r="2" fill="#1f6fc6"/><path d="M9 8h4c0 3-1 5-4 6 1-2 2-3 0-6z" fill="#1f6fc6"/></svg></button>
  <button aria-label="软键盘"><svg viewBox="0 0 16 16"><rect y="2" width="16" height="12" rx="1" fill="#1f6fc6"/><path d="M2 5h12M2 8h12M4 11.500h8" stroke="#fff" stroke-width="1.500" stroke-dasharray="2 1"/></svg></button>
  <button aria-label="账户"><svg viewBox="0 0 16 16"><circle cx="7" cy="4" r="3.500" fill="#b6bcc6"/><path d="M0 15c0-9 14-9 14 0z" fill="#b6bcc6"/><path d="M9 9h6v6H9z" fill="#fff" stroke="#b6bcc6"/></svg></button>
  <button aria-label="皮肤"><svg viewBox="0 0 16 16"><path d="M5 1c2 2 4 2 6 0l5 3-2 4-2-1v8H4V7L2 8 0 4z" fill="#1f6fc6"/></svg></button>
  <button aria-label="工具"><svg viewBox="0 0 16 16"><path d="M14 3l-3 3-2-2 3-3C8-1 5 4 7 7l-6 5 3 3 6-6c4 1 7-2 4-6z" fill="#1f6fc6"/></svg></button>
  <i class="ime-tab"></i>
</div>

<div class="recorder">
  <span class="timer">00:04:25</span>
  <div class="pill">
    <button aria-label="暂停"><svg width="16" height="20"><path d="M2.500 0v20M13.500 0v20" stroke="#555" stroke-width="3"/></svg></button>
    <button aria-label="停止"><svg width="14" height="14"><rect width="14" height="14" rx="2" fill="#a8a8a8"/></svg></button>
    <button aria-label="画笔"><svg width="14" height="14"><path d="M12 1L3 10" stroke="#4a4a4a" stroke-width="4"/><path d="M0 14l1-4 3 3z" fill="#4a4a4a"/></svg></button>
  </div>
</div>

<div class="balloon" role="dialog" aria-labelledby="btitle">
  <svg class="tail" width="20" height="22"><path d="M0 1.500L18.500 20V1" fill="#ffffe1" stroke="#000"/><path d="M1 0h17v2H1z" fill="#ffffe1"/></svg>
  <div class="bhead">
    <svg width="16" height="16" viewBox="0 0 16 16"><circle cx="8" cy="8" r="7.500" fill="#2b50b4" stroke="#8a9bc4"/><path d="M8 3v2M6.500 7H8v5M6 12.500h4" stroke="#fff" stroke-width="2" fill="none"/></svg>
    <strong id="btitle">通讯中心</strong>
    <button aria-label="关闭"><svg width="10" height="10"><path d="M2 1l6 8M8 1L2 9" stroke="#000" stroke-width="2"/></svg></button>
  </div>
  <p>使软件保持最新的简单方法。</p>
  <a href="#">单击此处。</a>
</div>
</body>
</html>
```
FILE: styles.css
```css
* { box-sizing: border-box; }
html, body { height: 100%; }
body {
  margin: 0;
  display: flex;
  flex-direction: column;
  overflow: hidden;
  position: relative;
  background: #efefef;
  font: 12px "Noto Sans", "Noto Sans CJK SC", sans-serif;
  color: #000;
}
button { border: 0; padding: 0; margin: 0; background: none; font: inherit; color: inherit; }
select, input { font: inherit; color: inherit; border: 0; padding: 0; margin: 0; background: none; min-width: 0; }
svg { display: block; flex: none; }
i { flex: none; }

/* Title bar */
.titlebar {
  height: 22px;
  flex: none;
  display: flex;
  align-items: center;
  gap: 5px;
  border-bottom: 1px solid #12305a;
  background:
    radial-gradient(ellipse 14px 8px at 494px 21px, #2c8ccc, transparent),
    radial-gradient(ellipse 28px 14px at 571px 16px, #1616a6 60%, transparent),
    radial-gradient(ellipse 26px 10px at 722px 17px, #86a4dc 40%, transparent),
    linear-gradient(90deg, #b2c6d4 0, #bccfdc 260px, #a3bad0 400px, #7d9fc0 440px, #1f5595 470px, #1d5696 900px, #1a4c88 1200px, #153c70 100%);
}
.app-icon { width: 16px; height: 16px; }
.title { margin: 0; font-size: 12px; font-weight: 400; line-height: 20px; white-space: nowrap; flex: 1; }
.winbtns { display: flex; align-self: flex-start; margin-right: 2px; border: 1px solid #b7c7d8; border-top: 0; border-radius: 0 0 5px 5px; overflow: hidden; }
.wb { width: 28px; height: 17px; display: grid; place-items: center; background: linear-gradient(#a9bac9, #5c7390 50%, #3f5c80); border-right: 1px solid #b7c7d8; }
.wb.close { width: 47px; border: 0; background: linear-gradient(#e2a79b, #c85640 50%, #b33321); }

/* Menu */
.menubar { height: 21px; flex: none; display: flex; align-items: center; gap: 1px; padding-left: 7px; border-bottom: 1px solid #b4b8cc; background: linear-gradient(#fff, #f1f3fb 45%, #dcdff1 55%, #dfe2f4); }
.doc-icon { width: 16px; height: 16px; }
.menubar > button { padding: 0 7px; line-height: 20px; white-space: nowrap; }
.mdibtns { display: flex; gap: 2px; margin-left: auto; padding-right: 1px; }
.mdibtns button { width: 17px; height: 18px; display: grid; place-items: center; background: #e1edf8; border: 1px solid #9fb1c3; }

/* Tool rows */
.toolrow { display: flex; height: 28px; flex: none; gap: 2px; }
.toolbar { display: flex; align-items: center; height: 28px; padding: 0 4px 0 3px; border-right: 1px solid #a8a8a8; border-bottom: 1px solid #a8a8a8; border-top: 1px solid #fff; }
.grip { width: 6px; height: 24px; margin-right: 3px; border: solid #bbb; border-width: 0 1px; background: #fff; }
.t { width: 23px; height: 23px; display: grid; place-items: center; flex: none; }
.t svg { width: 16px; height: 16px; }
.sep { width: 2px; height: 18px; margin: 0 2px; background: #111; border-right: 1px solid #efefef; }
.d { width: 13px; height: 20px; display: grid; place-items: center; flex: none; }
.d::after { content: ""; border: 3px solid transparent; border-top-color: #000; border-bottom: 0; }
.d.off::after { border-top-color: #bbb; }
.combo { position: relative; display: flex; align-items: center; gap: 4px; height: 23px; padding-left: 5px; background: #fff; border: 1px solid #e2e2e2; font: 13px "Liberation Serif", "Noto Sans CJK SC", serif; }
.combo select { flex: 1; height: 21px; appearance: none; outline: 0; opacity: 1; }
.combo::after { content: ""; position: absolute; right: 5px; top: 9px; border: 4px solid transparent; border-top: 5px solid #000; border-bottom: 0; pointer-events: none; }
.combo.dim { border: 1px solid #a9a9a9; }
.combo.dim::after { border-top-color: #aaa; }
.combo.grey { background: linear-gradient(90deg, #efefef 100px, #fff 100px); padding-left: 8px; color: #777; font-size: 12px; }
.combo svg { width: 16px; height: 16px; }
.combo.layer { width: 301px; gap: 1px; padding-left: 4px; }
.combo.layer select { margin-left: 2px; }
.swatch { width: 11px; height: 11px; border: 1px solid #000; background: #fff; }
.line { height: 1px; background: #000; }
.l60 { width: 60px; }
.l35 { width: 35px; }
.w100 { width: 100px; }
.w120 { width: 120px; }
.w126 { width: 126px; }
.w150 { width: 150px; }
.w160 { width: 160px; }

/* Work area */
.work { flex: 1; display: flex; min-height: 0; gap: 2px; }
.docwin { flex: 1; display: flex; flex-direction: column; min-width: 0; border-left: 2px solid #999; border-top: 1px solid #808080; }
.viewrow { flex: 1; display: flex; min-height: 0; }
.drawing { flex: 1; min-width: 0; height: 100%; background: #000; overflow: hidden; }
.cad { fill: none; shape-rendering: crispEdges; }
.red { stroke: #c42020; }
.ember { fill: #300303; }
.yellow { stroke: #eeee84; }
.green { stroke: #46c046; }
.glow { fill: #003a0a; opacity: .7; }
.lime { stroke: #7df014; stroke-width: 3; }
.pink { stroke: #e060a0; }
.magenta { stroke: #f0f; stroke-width: 2; }
.mauve { stroke: #c040c0; }
.ucs { stroke: #fff; }
.ucs text { fill: #fff; stroke: none; font: 300 20px "Open Sans", sans-serif; }
.vscroll { width: 17px; display: flex; flex-direction: column; background: #f0f0f0; }
.vscroll button { height: 19px; display: grid; place-items: center; }
.track { flex: 1; }
.thumb { width: 15px; height: 15px; margin: 0 1px; border: 1px solid #999; background: linear-gradient(90deg, #fff, #ccc); }
.tri { width: 0; height: 0; border: 4px solid transparent; }
.tri.up { border-top: 0; border-bottom-color: #555; }
.tri.down { border-bottom: 0; border-top-color: #555; }
.tri.left { border-left: 0; border-right-color: #333; }
.tri.right { border-right: 0; border-left-color: #333; }
.tabrow { height: 15px; flex: none; display: flex; align-items: stretch; }
.nav { width: 18px; display: grid; place-items: center; border-right: 1px solid #aaa; border-bottom: 1px solid #aaa; }
.tabs { position: relative; margin-left: 4px; display: flex; }
.tabs svg { position: absolute; left: 0; top: 0; }
.tabs button { position: relative; padding: 0 6px 0 5px; line-height: 14px; height: 14px; }
.tabs .on { color: #fff; padding: 0 6px 0 7px; }
.hscroll { width: 546px; margin-left: auto; display: flex; align-items: center; padding-right: 18px; }
.hscroll button { width: 17px; display: grid; place-items: center; }
.split { width: 4px; height: 14px; border: 1px solid #aaa; background: #fff; }
.side { width: 26px; flex: none; }
.vbar { display: flex; flex-direction: column; align-items: center; border: 1px solid #fff; border-right-color: #aaa; border-bottom-color: #aaa; padding-bottom: 5px; margin-bottom: 2px; }
.vgrip { width: 20px; height: 6px; margin: 2px 0 1px; border: solid #bbb; border-width: 1px 0; background: #fff; }
.vbar button { width: 22px; height: 22px; display: grid; place-items: center; }
.vbar svg { width: 16px; height: 16px; }

/* Command window */
.command { flex: none; display: flex; margin-top: 3px; padding: 3px 0 4px 6px; border-top: 2px solid #808080; }
.command .grip { height: auto; margin: 4px 4px 3px 0; }
.console { flex: 1; background: #fff; border: 1px solid #808080; border-width: 2px 0 0 1px; font: 15px/13px "Liberation Mono", "Noto Sans CJK SC", monospace; }
.log { margin: 0; padding: 2px 0 3px 2px; font: inherit; }
.prompt { display: flex; border-top: 1px solid #a0a0a0; padding: 2px 0 0 2px; }
.prompt input { flex: 1; height: 14px; outline: 0; }

/* Status bar */
.status { height: 22px; flex: none; display: flex; align-items: center; gap: 2px; padding: 1px 0 1px 5px; border-top: 2px solid #999; background: #efeded; }
.coords { width: 250px; height: 17px; padding-left: 2px; border: 1px solid #b5b5b5; color: #999; font: 10px/16px "Liberation Mono", monospace; }
.status > button { height: 17px; line-height: 17px; padding: 0 2px; border: 1px solid #fff; border-right-color: #aaa; border-bottom-color: #aaa; white-space: nowrap; }
.status > .in { border-color: #222 #fff #fff #222; }
.status > .dyn { font: 10px/15px "Liberation Mono", monospace; }
.stray { margin-left: auto; border: 1px solid #aaa; border-width: 1px 0 0 1px; height: 18px; padding-left: 2px; width: 44px; }
.status > .d { border: 0; margin-bottom: -4px; }
.status > .d::after { border-width: 4px 4px 0; }

/* Taskbar */
.taskbar {
  height: 40px;
  flex: none;
  display: flex;
  align-items: center;
  border-top: 1px solid #24405e;
  background:
    linear-gradient(90deg, #2b6288 0, #3d83a7 110px, #2c76ac 320px, #3c88c0 560px, transparent 575px, transparent 1100px, #869db8 1150px, #8aa1ba 1405px, #1d4a80 1430px, #123c70 100%) 0 0 / 100% 28px no-repeat,
    linear-gradient(90deg, #2b6288 0, #3d83a7 110px, #2c76ac 320px, #3c88c0 560px, transparent 575px, transparent 1100px, #8db1d2 1140px, #2a568a 1170px, #1d4a80 1430px, #123c70 100%) 0 28px / 100% 12px no-repeat,
    linear-gradient(#b0cdf0 0, #aecbee 22px, #2f7fc4 30px, #2271b8 100%);
}
.start { width: 36px; height: 36px; margin-left: 9px; }
.clover { width: 32px; height: 32px; margin: 0 14px 0 23px; }
.search { display: flex; align-items: center; width: 200px; height: 34px; padding-left: 5px; background: #efefef; gap: 4px; }
.search svg { width: 20px; height: 20px; }
.search .tri { border-bottom-color: #999; border-width: 0 3px 4px; }
.search input { flex: 1; outline: 0; font-size: 12px; }
.search button { width: 56px; height: 34px; background: #1e88f5; color: #fff; }
.tasks { display: flex; gap: 2px; margin-left: 6px; }
.task { width: 60px; height: 38px; display: grid; place-items: center; border: 1px solid #d5e6f2; border-radius: 2px; background: linear-gradient(135deg, #b5cfe0, #6d9fc0 45%, #89c0df); }
.task svg { width: 32px; height: 32px; }
.task.active { background: linear-gradient(135deg, #f3f9fc, #cde2f0 60%, #a6cfe6); }
.smudge { width: 164px; height: 7px; margin: 0 0 26px 100px; background: linear-gradient(90deg, #56708f 60px, transparent 60px, transparent 74px, #6c86a5 74px); filter: blur(3px); opacity: .55; }
.tray { margin-left: auto; display: flex; align-items: center; gap: 8px; height: 100%; color: #fff; }
.tray svg { width: 16px; height: 16px; }
.lang { font: 13px "Liberation Serif", serif; margin-bottom: 5px; }
.tray .raised { margin-bottom: 5px; }
.tray .restore { width: 16px; height: 22px; margin-bottom: 5px; }
.clock { display: flex; flex-direction: column; align-items: center; line-height: 17px; width: 60px; margin-left: 8px; white-space: nowrap; }
.showdesk { width: 14px; height: 100%; border: 1px solid #7591b0; background: linear-gradient(135deg, #5d7fa5, #173f70); }

/* Floating overlays */
.battery { position: absolute; left: 860px; top: 1px; width: 59px; height: 10px; border: 1px solid #a9c3de; border-radius: 4px; background: repeating-linear-gradient(90deg, #5ed67c 0 1px, #0d2f4c 1px 2px) 2px 1px / 20px 6px no-repeat #0c2748; }
.ime { position: absolute; right: 178px; top: 3px; height: 24px; display: flex; align-items: center; gap: 6px; padding: 0 3px 0 30px; background: #fff; border: 1px solid #c3d3e6; }
.ime svg { width: 16px; height: 16px; }
.ime-logo { position: absolute; left: -2px; top: -4px; }
.ime .ime-logo { width: 28px; height: 28px; }
.ime .cn { width: 16px; color: #1f6fc6; font-weight: 700; font-size: 15px; line-height: 20px; }
.ime-tab { position: absolute; left: 30px; top: 23px; width: 28px; height: 10px; background: #a5f2fa; border: 1px solid #87949c; border-top: 0; }
.recorder { position: absolute; right: 11px; top: 61px; display: flex; align-items: center; }
.timer { position: relative; z-index: 1; width: 78px; height: 78px; border-radius: 50%; border: 4px solid #fff; display: grid; place-items: center; color: #fff; font: 13px "Noto Sans", sans-serif; background: radial-gradient(ellipse 55px 30px at 62px 70px, #f76c66 96%, transparent), radial-gradient(circle at 20% 50%, #ff8d82, #ee3b33 45%, #dd1f22); }
.pill { display: flex; align-items: center; gap: 15px; height: 38px; margin-left: -10px; padding: 0 17px; border-radius: 0 19px 19px 0; background: #fff; }
.balloon { position: absolute; right: 7px; top: 756px; width: 184px; height: 75px; padding: 8px 7px 0 15px; background: #ffffe1; border: 1px solid #000; border-radius: 14px; white-space: nowrap; }
.tail { position: absolute; left: 124px; top: 72px; }
.bhead { display: flex; align-items: center; gap: 10px; margin-left: -6px; height: 16px; }
.bhead strong { flex: 1; font-size: 13px; line-height: 14px; }
.bhead button { width: 16px; height: 16px; display: grid; place-items: center; border: 1px solid #888; background: #f4f4ea; }
.balloon p { margin: 5px 0 0; line-height: 17px; }
.balloon a { display: inline-block; color: #00c; line-height: 17px; }
```
